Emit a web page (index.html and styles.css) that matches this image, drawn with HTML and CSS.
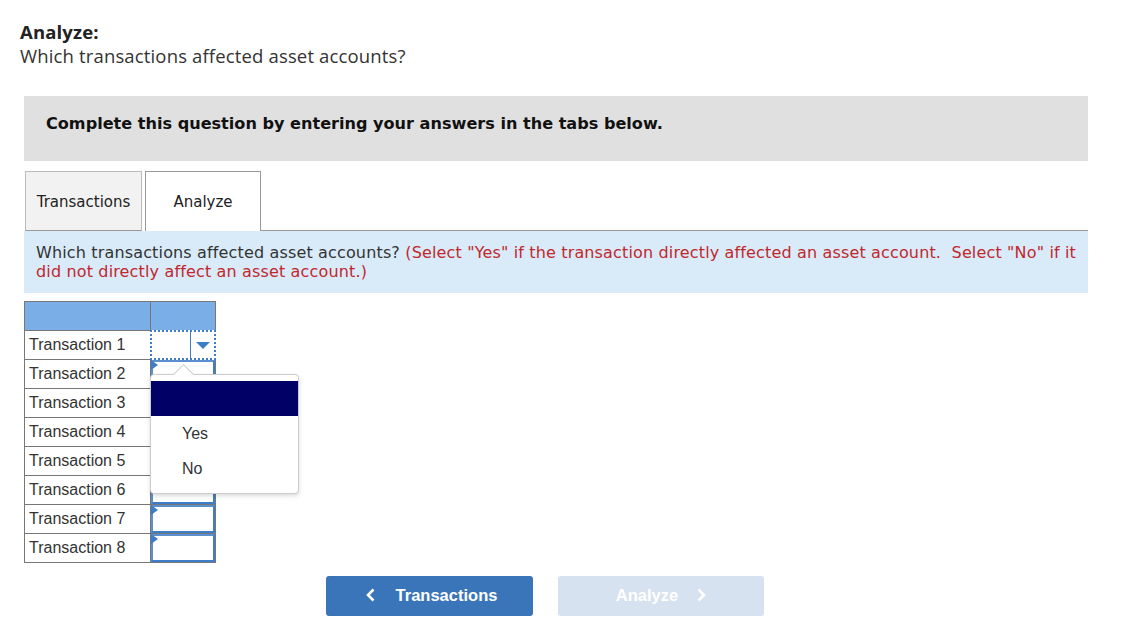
FILE: index.html
```html
<!DOCTYPE html>
<html>
<head>
<meta charset="utf-8">
<link rel="stylesheet" href="styles.css">
</head>
<body>
<div class="page">
  <div class="intro">
    <div class="intro-title">Analyze:</div>
    <div class="intro-text">Which transactions affected asset accounts?</div>
  </div>
  <div class="notice">Complete this question by entering your answers in the tabs below.</div>
  <div class="tabs">
    <div class="tab tab-inactive">Transactions</div>
    <div class="tab tab-active">Analyze</div>
    <div class="tab-rest"></div>
  </div>
  <div class="instruction">Which transactions affected asset accounts? <span class="red">(Select "Yes" if the transaction directly affected an asset account.&nbsp; Select "No" if it did not directly affect an asset account.)</span></div>
  <div class="table-wrap">
    <table class="grid">
      <tr class="head"><th class="c1"></th><th class="c2"></th></tr>
      <tr><td class="c1">Transaction 1</td><td class="c2 sel-cell"><div class="select"><span class="select-val"></span><span class="select-btn"><svg width="14" height="7" viewBox="0 0 14 7"><polygon points="0,0 14,0 7,7" fill="#3d7cc9"/></svg></span></div></td></tr>
      <tr><td class="c1">Transaction 2</td><td class="c2"><div class="inp"><span class="flag"></span></div></td></tr>
      <tr><td class="c1">Transaction 3</td><td class="c2"><div class="inp"><span class="flag"></span></div></td></tr>
      <tr><td class="c1">Transaction 4</td><td class="c2"><div class="inp"><span class="flag"></span></div></td></tr>
      <tr><td class="c1">Transaction 5</td><td class="c2"><div class="inp"><span class="flag"></span></div></td></tr>
      <tr><td class="c1">Transaction 6</td><td class="c2"><div class="inp"><span class="flag"></span></div></td></tr>
      <tr><td class="c1">Transaction 7</td><td class="c2"><div class="inp"><span class="flag"></span></div></td></tr>
      <tr><td class="c1">Transaction 8</td><td class="c2"><div class="inp"><span class="flag"></span></div></td></tr>
    </table>
    <div class="popup">
      <span class="caret"></span>
      <div class="opt opt-hl"></div>
      <div class="opt">Yes</div>
      <div class="opt">No</div>
    </div>
  </div>
  <div class="nav">
    <div class="btn btn-prev"><svg class="chev" width="9" height="14" viewBox="0 0 9 14"><polyline points="7.5,1.5 2,7 7.5,12.5" fill="none" stroke="#fff" stroke-width="2.6"/></svg><span>Transactions</span></div>
    <div class="btn btn-next"><span>Analyze</span><svg class="chev" width="9" height="14" viewBox="0 0 9 14"><polyline points="1.5,1.5 7,7 1.5,12.5" fill="none" stroke="#fff" stroke-width="2.6"/></svg></div>
  </div>
</div>
</body>
</html>
```
FILE: styles.css
```css
html, body {
  margin: 0;
  padding: 0;
  background: #fff;
}
.page {
  padding: 20px 0 0 24px;
  width: 1064px;
}
.intro {
  margin-left: -4px;
  font-family: "Open Sans", Lato, sans-serif;
  font-size: 18.5px;
  letter-spacing: 0.15px;
  line-height: 24px;
  color: #333;
}
.intro-title {
  font-weight: 700;
  color: #222;
}
.notice {
  margin-top: 28px;
  height: 65px;
  background: #e0e0e0;
  box-sizing: border-box;
  padding: 18px 0 0 22px;
  font-family: "DejaVu Sans", Verdana, sans-serif;
  font-weight: bold;
  font-size: 16.1px;
  color: #111;
}
.tabs {
  margin-top: 10px;
  display: flex;
  height: 60px;
}
.tab {
  box-sizing: border-box;
  height: 60px;
  display: flex;
  align-items: center;
  justify-content: center;
  font-family: "DejaVu Sans", Verdana, sans-serif;
  font-size: 15px;
  color: #222;
}
.tab-inactive {
  width: 117px;
  margin-left: 1px;
  background: #f2f2f2;
  border: 1px solid #bbb;
  border-bottom: 1px solid #999;
  padding-top: 2px;
}
.tab-active {
  width: 116px;
  margin-left: 3px;
  background: #fff;
  border: 1px solid #999;
  border-bottom: none;
}
.tab-rest {
  flex: 1;
  border-bottom: 1px solid #999;
}
.instruction {
  height: 62px;
  box-sizing: border-box;
  background: #d9ebf9;
  padding: 12px 12px 0 12px;
  font-family: "DejaVu Sans", Verdana, sans-serif;
  font-size: 16px;
  letter-spacing: 0.15px;
  line-height: 19px;
  color: #333;
}
.red {
  color: #c1272d;
}
.table-wrap {
  position: relative;
  margin-top: 8px;
}
.grid {
  border-collapse: collapse;
  font-family: "Liberation Sans", Arial, sans-serif;
  font-size: 16px;
  color: #333;
}
.grid th, .grid td {
  border: 1px solid #777;
  padding: 0;
  height: 28px;
}
.grid .head th {
  background: #7aaee6;
  height: 28px;
}
.grid .c1 {
  width: 126px;
  padding-left: 4px;
  box-sizing: border-box;
  text-align: left;
}
.grid .c2 {
  width: 64px;
  position: relative;
}
.sel-cell {
  padding: 0;
}
.select {
  position: absolute;
  left: -1px;
  top: -1px;
  right: -1px;
  bottom: -1px;
  border: 2px dotted #3d7cc9;
  display: flex;
  background: #fff;
}
.select-val {
  flex: 1;
  border-right: 1px solid #3d7cc9;
}
.select-btn {
  width: 23px;
  display: flex;
  align-items: center;
  justify-content: center;
}
.inp {
  position: absolute;
  left: 0;
  top: 0;
  right: 0;
  bottom: 0;
  border: 2px solid #3d7cc9;
  border-color: #5b8fd0 #3d7cc9 #3d7cc9 #5b8fd0;
  background: #fff;
}
.flag {
  position: absolute;
  left: -2px;
  top: -2px;
  width: 0;
  height: 0;
  border-top: 5px solid transparent;
  border-bottom: 5px solid transparent;
  border-left: 7px solid #3d7cc9;
}
.popup {
  position: absolute;
  left: 126px;
  top: 73px;
  width: 149px;
  height: 120px;
  box-sizing: border-box;
  background: #fff;
  border: 1px solid #ccc;
  border-radius: 4px;
  box-shadow: 0 2px 4px rgba(0,0,0,0.15);
  padding-top: 6px;
  font-family: "Liberation Sans", Arial, sans-serif;
  font-size: 16px;
  color: #333;
}
.caret {
  position: absolute;
  left: 25px;
  top: -8px;
  width: 14px;
  height: 14px;
  background: #fff;
  border-left: 1px solid #ccc;
  border-top: 1px solid #ccc;
  transform: rotate(45deg);
}
.opt {
  position: relative;
  height: 35px;
  line-height: 35px;
  padding-left: 31px;
}
.opt-hl {
  background: #000066;
}
.nav {
  margin-top: 13px;
  margin-left: 302px;
  display: flex;
  gap: 25px;
}
.btn {
  width: 207px;
  height: 40px;
  box-sizing: border-box;
  border-radius: 3px;
  display: flex;
  align-items: center;
  justify-content: center;
  gap: 21px;
  padding-bottom: 2px;
  font-family: "Liberation Sans", Arial, sans-serif;
  font-weight: bold;
  font-size: 16.5px;
  color: #fff;
}
.btn-prev {
  background: #3a75b9;
  padding-left: 4px;
}
.btn-next {
  width: 206px;
  background: #d6e2f0;
  gap: 19px;
}
.chev {
  display: block;
}
```
